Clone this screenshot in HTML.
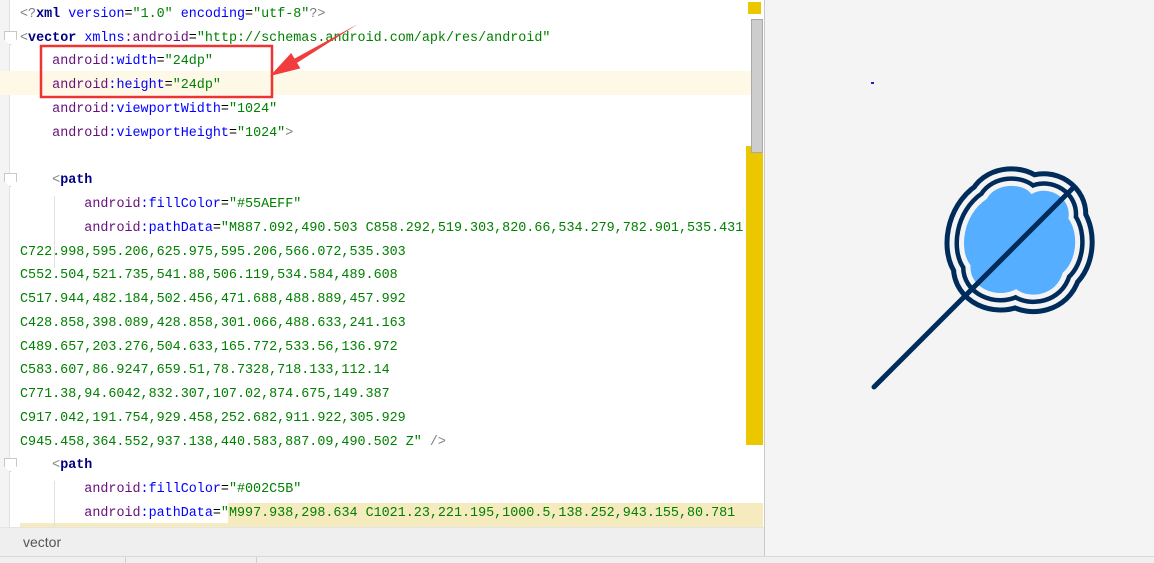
<!DOCTYPE html>
<html><head><meta charset="utf-8"><style>
*{margin:0;padding:0;box-sizing:border-box}
body{width:1154px;height:563px;overflow:hidden;background:#fff;position:relative;font-family:"Liberation Mono","Noto Sans CJK SC",monospace}
#gut{position:absolute;left:0;top:0;width:10px;height:527px;background:#f4f4f4;border-right:1px solid #e2e2e2}
.l{position:absolute;left:20px;height:24px;line-height:24px;font-size:13.4px;white-space:pre;color:#008000;margin-top:2px}
.t{color:#000080;font-weight:bold}
.a{color:#660e7a}
.b{color:#0000ff}
.g{color:#808080}
.k{color:#000}
.fold{position:absolute;left:4px;width:13px;height:14px;background:#fff;border:1px solid #c8c8c8;clip-path:polygon(0 0,100% 0,100% 60%,50% 100%,0 60%)}
#right{position:absolute;left:764px;top:0;width:390px;height:556px;background:#f4f4f4;border-left:1px solid #c9c9c9}
#status{position:absolute;left:0;top:527px;width:764px;height:29px;background:#efefef;border-top:1px solid #e4e4e4;font-family:"Liberation Sans",sans-serif;font-size:14px;color:#555;padding-left:23px;line-height:29px}
#bot{position:absolute;left:0;top:556px;width:1154px;height:7px;background:#f0f0f0;border-top:1px solid #d8d8d8}
</style></head><body>
<div id="gut"></div>
<div style="position:absolute;left:0;top:71px;width:752px;height:24px;background:#fef9e7"></div>
<div style="position:absolute;left:228px;top:503px;width:535px;height:24px;background:#f5ebbf"></div>
<div style="position:absolute;left:20px;top:523px;width:208px;height:4px;background:#f5ebbf"></div>
<div class="fold" style="top:31px"></div>
<div class="fold" style="top:173px"></div>
<div class="fold" style="top:458px"></div>
<div style="position:absolute;left:54px;top:196px;width:1px;height:72px;background:#e0e0e0"></div>
<div style="position:absolute;left:54px;top:481px;width:1px;height:46px;background:#e0e0e0"></div>

<div class="l" style="top:1px"><span class="g">&lt;?</span><span class="t">xml</span> <span class="b">version</span><span class="k">=</span>"1.0" <span class="b">encoding</span><span class="k">=</span>"utf-8"<span class="g">?&gt;</span></div>
<div class="l" style="top:25px"><span class="g">&lt;</span><span class="t">vector</span> <span class="b">xmlns</span><span class="a">:android</span><span class="k">=</span>"http://schemas.android.com/apk/res/android"</div>
<div class="l" style="top:48px">    <span class="a">android</span><span class="b">:width</span><span class="k">=</span>"24dp"</div>
<div class="l" style="top:72px">    <span class="a">android</span><span class="b">:height</span><span class="k">=</span>"24dp"</div>
<div class="l" style="top:96px">    <span class="a">android</span><span class="b">:viewportWidth</span><span class="k">=</span>"1024"</div>
<div class="l" style="top:120px">    <span class="a">android</span><span class="b">:viewportHeight</span><span class="k">=</span>"1024"<span class="g">&gt;</span></div>
<div class="l" style="top:167px">    <span class="g">&lt;</span><span class="t">path</span></div>
<div class="l" style="top:191px">        <span class="a">android</span><span class="b">:fillColor</span><span class="k">=</span>"#55AEFF"</div>
<div class="l" style="top:215px">        <span class="a">android</span><span class="b">:pathData</span><span class="k">=</span>"M887.092,490.503 C858.292,519.303,820.66,534.279,782.901,535.431</div>
<div class="l" style="top:239px">C722.998,595.206,625.975,595.206,566.072,535.303</div>
<div class="l" style="top:262px">C552.504,521.735,541.88,506.119,534.584,489.608</div>
<div class="l" style="top:286px">C517.944,482.184,502.456,471.688,488.889,457.992</div>
<div class="l" style="top:310px">C428.858,398.089,428.858,301.066,488.633,241.163</div>
<div class="l" style="top:334px">C489.657,203.276,504.633,165.772,533.56,136.972</div>
<div class="l" style="top:357px">C583.607,86.9247,659.51,78.7328,718.133,112.14</div>
<div class="l" style="top:381px">C771.38,94.6042,832.307,107.02,874.675,149.387</div>
<div class="l" style="top:405px">C917.042,191.754,929.458,252.682,911.922,305.929</div>
<div class="l" style="top:429px">C945.458,364.552,937.138,440.583,887.09,490.502 Z" <span class="g">/&gt;</span></div>
<div class="l" style="top:452px">    <span class="g">&lt;</span><span class="t">path</span></div>
<div class="l" style="top:476px">        <span class="a">android</span><span class="b">:fillColor</span><span class="k">=</span>"#002C5B"</div>
<div class="l" style="top:500px">        <span class="a">android</span><span class="b">:pathData</span><span class="k">=</span>"M997.938,298.634 C1021.23,221.195,1000.5,138.252,943.155,80.781</div>

<div style="position:absolute;left:748px;top:2px;width:13px;height:12px;background:#ebc700"></div>
<div style="position:absolute;left:746px;top:146px;width:17px;height:299px;background:#ebc700"></div>
<div style="position:absolute;left:751px;top:19px;width:12px;height:134px;background:#cdcdcd;border:1px solid #a8a8a8"></div>

<div id="status">vector</div>
<div id="right"></div>
<div id="bot"></div>
<div style="position:absolute;left:125px;top:557px;width:1px;height:6px;background:#d0d0d0"></div>
<div style="position:absolute;left:256px;top:557px;width:1px;height:6px;background:#d0d0d0"></div>

<svg style="position:absolute;left:0;top:0" width="1154" height="563">
<rect x="41" y="46" width="231" height="51" fill="none" stroke="#ee3333" stroke-width="2.5"/>
<polygon points="358,24 297,62.9 300.4,68.4 270,76 291.2,53 294.5,58.6" fill="#f03c3c"/>
<rect x="871" y="82" width="3" height="2" fill="#2020c0"/>
<defs><path id="c" d="M985,197 C995,180 1022,180 1032,191 C1050,182 1074,196 1071,218 C1082,234 1079,262 1065,274 C1058,298 1030,302 1016,292 C996,302 967,290 968,266 C956,250 960,214 985,197 Z"/></defs>
<use href="#c" fill="none" stroke="#002c5b" stroke-width="34"/>
<use href="#c" fill="none" stroke="#f4f4f4" stroke-width="24"/>
<use href="#c" fill="#55aeff" stroke="#002c5b" stroke-width="14"/>
<use href="#c" fill="#55aeff" stroke="#f4f4f4" stroke-width="5"/>
<line x1="874" y1="387" x2="1073" y2="188" stroke="#002c5b" stroke-width="5" stroke-linecap="round"/>
</svg>
</body></html>
